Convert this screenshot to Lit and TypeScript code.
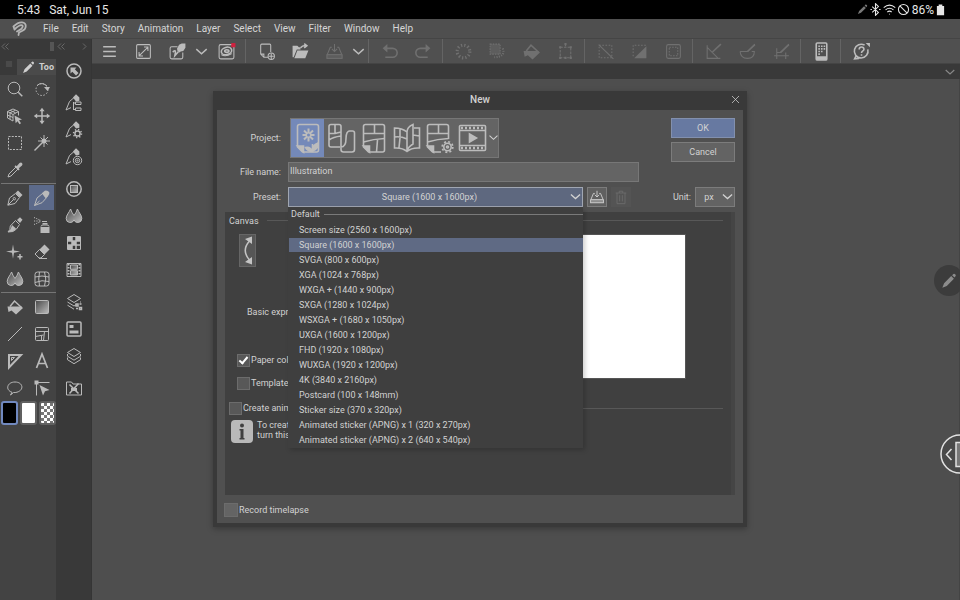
import { LitElement, html, svg, css, nothing, type SVGTemplateResult } from "lit";
import { customElement, property, state } from "lit/decorators.js";
import { classMap } from "lit/directives/class-map.js";

/* Icons are drawn on an 18 x 18 grid. Strokes and fills use currentColor. */
const pen = svg`<path d="M1.500 16.500 4 9 9.500 4.500l4 4.200L9 13.700z"/><path class="f" d="m8.800 4.300 3-2.600q3-.5 4.500 1.500.5 2-1.300 4l-2.300 2z"/><path d="m1.500 16.500 5-4.500"/>`;
const penSmall = svg`<path d="M1 16 4.500 7.500 9 3.600M1 16l5-2.400"/><path class="f" d="M8 3.400 11 .2l3.400 3.300v3.200L11 7.600z"/>`;
const blobs = svg`<path class="g" d="M5.600 2C4 6 1.200 8 1.200 11.600a4 4 0 0 0 7.800 1.200 4 4 0 0 0 7.800-1.200C16.800 8 14 6 12.400 2 11.500 5 10.300 6.500 9 8.500 7.700 6.500 6.500 5 5.600 2z"/>`;

const icons: Record<string, SVGTemplateResult> = {
  menu: svg`<path class="b" d="M3 4.500h12M3 9h12M3 13.500h12"/>`,
  expand: svg`<rect x="2.500" y="2.500" width="13" height="13" rx="1"/><path d="M5 13 13 5M9.500 4.800H13.200V8.500M4.800 9.500v3.700H8.500"/>`,
  pinPen: svg`<path d="M9 4.500H3.500Q2 4.500 2 6v8.500Q2 16 3.500 16h9q1.500 0 1.500-1.500V10"/><path class="b" d="M4.500 9.500q3-2.500 2.500.5t-.5 3 3.500-4"/><path class="f" d="M8.500 6.500 10.500 2.500 13 1.500h3.500v4l-2 3-2.500.5-1 1-2-1.500z"/>`,
  chevron: svg`<path class="b" d="m3.500 6.500 5.500 5 5.500-5"/>`,
  spiral: svg`<rect x="2" y="2.500" width="14" height="13.500" rx="1.500"/><ellipse class="b" cx="9" cy="8.500" rx="5" ry="3.500" transform="rotate(-15 9 8.500)"/><ellipse class="b" cx="9.300" cy="8.600" rx="2" ry="1.200"/><path d="M4 12q4 2.500 10-1"/><path class="red" d="M13.500 1h4v4h-4z"/>`,
  newPage: svg`<path d="M10.500 14.500H6.500L3.500 11.500V3q0-1 1-1H12q1 0 1 1v6.500M3.500 11.500h3v3"/><circle cx="13.500" cy="13.500" r="3"/><path d="M13.500 11v5M11 13.500h5"/>`,
  folder: svg`<path class="f" d="M1.500 3.500h4.500L7.500 5H9v2H5.500L2.500 14.500h-1z"/><path class="f" d="M6 8h10.500l-3 7.500H3.200z"/><path class="b" d="M9 5.500q2-2.500 5-2.200M12.500 1.500l2.500 2-2.500 2"/>`,
  save: svg`<path d="M6.500 5H5L2.300 11.500M11.500 5H13l2.700 6.500M9 2v7M6.500 6.500 9 9l2.500-2.500"/><rect x="1.800" y="12" width="14.400" height="3.500" fill="currentColor" fill-opacity=".4"/>`,
  undo: svg`<path class="b" d="M6 6h6a4.200 4.200 0 0 1 0 8.500H5"/><path class="f" d="M7 2v8L2.500 6z"/>`,
  redo: svg`<path class="b" d="M12 6H6a4.200 4.200 0 0 0 0 8.500h7"/><path class="f" d="M11 2v8l4.500-4z"/>`,
  burst: svg`<circle cx="9" cy="9" r="6" stroke-width="3" stroke-dasharray="1.200 1.940"/>`,
  shadowSel: svg`<rect x="2" y="2" width="9.500" height="9.500" fill="currentColor" fill-opacity=".4" stroke-dasharray="1.500 1"/><path stroke-width="2" stroke-dasharray="1 1.300" d="M14 6q3 8-8 8.500"/>`,
  bucket: svg`<path class="f" d="M1.500 8.500h14L17 10l-7 6.500-4.500-4-3 1.500z"/><path class="b" d="M4 8.500 8.500 3l7 6.500"/>`,
  transform: svg`<path d="M4 5h10v10H4zM9 1.500V5" stroke-dasharray="2.500 1"/><path class="f" d="M3 4h2v2H3zM13 4h2v2h-2zM3 14h2v2H3zM13 14h2v2h-2zM8 1h2v2H8zM8 14h2v2H8z"/>`,
  deselect: svg`<path d="M3 3h12v12H3z" stroke-dasharray="1.500 1.500"/><path d="m2.500 2.500 14 13.500"/>`,
  invert: svg`<path d="M15 3H3v12" stroke-dasharray="1.500 1.500"/><path class="f" d="M15.500 4v11.500H4z"/>`,
  border: svg`<rect x="2.500" y="2.500" width="13" height="13" rx="1.500"/><path d="M5 5h8v8H5z" stroke-dasharray="1.500 1.200"/>`,
  snapRuler: svg`<path d="M3 3v12.500h12.500M3 5l10 10"/><path class="b" d="m8 9.500 8-7.500"/>`,
  snapSpecial: svg`<path d="M2 9h7l7-7M2 9q.5 6.500 7 6.500T15.500 9H13"/><path class="b" d="m9 9 7-6.500"/>`,
  snapGrid: svg`<path d="M2 13h14M4.500 6v10M13 10v6M4.500 10H8l8-8"/><path class="b" d="m8 10 8-7.500"/>`,
  device: svg`<rect x="4" y="1" width="10" height="16" rx="1" class="b"/><path d="M6 4h1.500M8.500 4H10M11 4h1.500M6 6.500h1.500M8.500 6.500H10M11 6.500h1.500M6 9h1.500M8.500 9H10M6 11.500h1.500" class="b"/><path class="f" d="M4 13.500h10V17H4z"/>`,
  help: svg`<path class="b" d="M12 3a6.500 6.500 0 1 0 3 4M4 13l-1.500 3 4-.5M6.800 7c0-3 4.500-3 4.500 0 0 1.500-2.300 1.500-2.300 3.500M9 11.700v1.300"/><path class="f" d="M13 1h4v4z"/>`,

  quick: svg`<circle class="b" cx="9" cy="9" r="7"/><path class="f" d="M5.500 5.500h6L9.800 7.300l3.700 3.700-2.500 2.500-3.700-3.700-1.800 1.700z"/>`,
  penTree: svg`${penSmall}<path d="M8.500 8v8M8.500 9h2M8.500 15.500h2M10.500 8h5.500v2.500h-5.500zM10.500 14h5.500v2.500h-5.500z"/>`,
  penGear: svg`${penSmall}<circle cx="12.500" cy="12.500" r="2.600" class="b"/><circle cx="12.500" cy="12.500" r="4" stroke-dasharray="1.300 1.840" stroke-width="1.500"/>`,
  penTarget: svg`${penSmall}<circle cx="12.500" cy="12.500" r="4.200"/><circle cx="12.500" cy="12.500" r="2.200"/><circle cx="12.500" cy="12.500" r=".6"/>`,
  wheel: svg`<circle cx="9" cy="9" r="7.200" class="b"/><rect class="g" x="5.500" y="5.500" width="7" height="7"/>`,
  blobs,
  palette: svg`<path d="M2.500 2.500h13v13h-13z"/><path class="f" d="M3 3h4v4H3zM11 3h4v4h-4zM7 7h4v4H7zM3 11h4v4H3z"/><path class="b" d="M7 2.500v13M11 2.500v13M2.500 7h13M2.500 11h13"/>`,
  film: svg`<path d="M2 2.500h14v13H2z"/><path class="g" d="M5.500 4h7v4.300h-7zM5.500 9.700h7v4.300h-7z"/><path stroke-width="2" stroke-dasharray="1.500 1.500" d="M3.500 3v12M14.500 3v12"/>`,
  layersGear: svg`<path d="m2.500 5.500 6.500-4 6.500 4-6.500 4zM2.500 9 9 13l2-1.200M2.500 12.200 9 16.200M15.500 8.500v1"/><path class="b" d="M11 11h2v2h-2zM14.500 14.500h2v2h-2zM14.500 11h2M11 15.500h2"/>`,
  navigator: svg`<rect class="b" x="2" y="2" width="14" height="14" rx="1"/><path class="f" d="M4.500 5h4v3h-4zM4.500 10.500h9v3h-9z"/>`,
  layers: svg`<path d="m2.500 5.500 6.500-4 6.500 4-6.500 4zM2.500 7v2.200l6.500 4 6.500-4V7M2.500 10.500v2.200l6.500 4 6.500-4v-2.200"/>`,
  folderX: svg`<path d="M1.500 3h5l1.500 2h8.500v11h-15z"/><path class="b" d="m4.500 5.500 9 9M13.500 4.500l-9 10"/><path class="f" d="M6 9h6v3H6z"/>`,

  zoom: svg`<circle cx="8" cy="8" r="5.800"/><path class="b" d="m12.300 12.300 4 4"/>`,
  rotate: svg`<circle cx="9" cy="9.500" r="6" stroke-dasharray="1.500 1.640"/><path d="M4 5.500a6.500 6.500 0 0 1 10 1"/><path class="f" d="M11 7h6l-2.500 4z"/>`,
  cube: svg`<path d="M1.500 4.500 7 2l5.500 2.500v4M1.500 4.500V11L7 14V7.500M1.500 4.500 7 7.500l5.500-3M4 3.300l5.500 2.500M9.500 3.300 4 5.800V12M1.500 8 7 10.500"/><path class="f" d="m8.500 8.500 7.500 4-3 .8 2 3-1.500 1-2-3-1.800 2z"/>`,
  move: svg`<path class="b" d="M9 3v12M3 9h12"/><path class="f" d="M9 .8l2.600 3.400H6.400zM9 17.200l2.600-3.400H6.400zM.8 9l3.400-2.600v5.200zM17.200 9l-3.400-2.600v5.200z"/>`,
  marquee: svg`<path d="M2.500 2.500h13v13h-13z" stroke-dasharray="2 1.250"/>`,
  wand: svg`<path class="b" d="m1.500 16.500 8-8"/><path d="M11 1v12M5 7h12M7.500 3.500l7 7M15 3l-5 5"/><circle class="f" cx="11" cy="7" r="2.500"/>`,
  dropper: svg`<path d="m2 16 1-3 7-7 2 2-7 7z"/><path class="f" d="m8.500 5.500 1.200-1.200 1 .9L13.500 2q1.500-1 2.500 0t0 2.500l-3.200 2.800.9 1-1.200 1.200z"/>`,
  nib: svg`<path d="M1.800 16.200 3.500 9 9.500 4.500l4 4L9 14.500z"/><path class="f" d="m9.500 4 2.500-2.500 4.500 4.500L14 8.500z"/><path d="m2 16 5.500-5.500"/><circle cx="8.300" cy="9.700" r="1.200"/>`,
  pen,
  brush: svg`<path class="f" d="m11 4 3-2.800 2.500 2.500L14 7z"/><path d="m9.500 4.500 4 4-3 4.500q-3 3.500-8.500 3 2.500-2 2.300-6z"/><path class="f" d="M2 16q6 0 8-3.500L6 9q-.5 4-4 7z"/>`,
  airbrush: svg`<path class="f" d="M7.500 11h9v6h-9zM9.500 7h5v1.500h-5z"/><path d="M8 10.500q0-1.500 2-1.500h4q2 0 2 1.500M9 5.500h5"/><path stroke-dasharray="1.200 1.200" d="M1 1.500l7 3M1 5h7M1 8.500l7-3"/>`,
  sparkle: svg`<path class="f" d="M7 1.500 8 7.500l6 1L8 9.700l-1 6-1-6-6-1.200 6-1z"/><path class="b" d="M14 11v5.500M11.500 13.700h5"/>`,
  eraser: svg`<path class="f" d="m6.500 6.500 5-5 5 5-5 5z"/><path d="m6.500 6.500-4.500 4.500 4 4H8l3.500-3.500zM6 15.500h8"/>`,
  liquify: svg`<rect x="2" y="2" width="14" height="14" rx="2.500"/><path d="M6.500 2q-1.500 7 0 14M11.500 2q2.500 7 0 14M2 7q7-2 14 0M2 12.500q7-3 14-1"/>`,
  gradient: svg`<rect class="g" x="2.500" y="2.500" width="13" height="13" rx="1"/>`,
  line: svg`<path d="M2 16 16 2"/>`,
  panels: svg`<rect x="2.500" y="2.500" width="13" height="13" rx="1"/><path d="M2.500 6.500h13M8.500 15.500V10.500M2.500 11.500 10.500 10M10.500 15.500l1-9"/>`,
  rulerTool: svg`<path stroke-width="2" d="M3 3h12L3 15.500z"/><path d="M5.500 5.500h3l-3 3z"/>`,
  text: svg`<path stroke-width="1.700" d="M3.500 16 9 2l5.500 14M5.500 11.500h7"/>`,
  balloon: svg`<path d="M6 13.300C-1 11 1 3 9 3s9.500 8 2 10.200q-2 .6-3.500.3L4.500 16z"/>`,
  node: svg`<path class="f" d="M1.500 1.500h4v4h-4zM6.500 6l10 5-4.500 1.300-2 4.200z"/><path d="M3.500 3.500h13M3.500 3.500v13"/>`,
  hamburgerSmall: svg`<path d="M2 4.500h14M2 9h14M2 13.500h14"/>`,
  doubleLeft: svg`<path class="b" d="M8 3 2 9l6 6M15 3 9 9l6 6"/>`,
  right: svg`<path class="b" d="m6 3 6 6-6 6"/>`,
  pencil: svg`<path class="f" d="m1.500 16.500 2-5 8-8 3 3-8 8zM12.500 2.500 14 1q1-.5 2 .5t.5 2L15.200 5.200z"/>`,

  bluetooth: svg`<path class="b" d="m4.500 5 8.500 8-4 4V1l4 4-8.500 8M2 9h2M14 9h2"/>`,
  wifi: svg`<path class="b" d="M1 6.500q8-7 16 0M3.500 9.500q5.500-4.500 11 0M6 12.500q3-2.500 6 0M9 15v1"/>`,
  blocked: svg`<circle class="b" cx="9" cy="9" r="7"/><path class="b" d="m4 4 10 10"/>`,
  battery: svg`<path class="f" d="M6.500 2h5v2H14v13H4V4h2.500z"/>`,
  close: svg`<path class="b" d="m2 2 14 14M16 2 2 16"/>`,
  trash: svg`<path d="M3 4.500h12M4.500 4.500v12h9v-12M7 4.500v-2h4v2M7.500 7v7M10.500 7v7"/>`,
};

@customElement("ui-icon")
export class UiIcon extends LitElement {
  @property() name = "";
  static styles = css`
    :host { display: inline-flex; width: 18px; height: 18px; flex: none; }
    svg { width: 100%; height: 100%; display: block; fill: none; stroke: currentColor; }
    .f { fill: currentColor; stroke: none; }
    .b { stroke-width: 1.5; }
    .g { fill: url(#shade); }
    .red { fill: #d0213f; stroke: none; }
  `;
  render() {
    return html`<svg viewBox="0 0 18 18" aria-hidden="true">
      <defs><linearGradient id="shade" x1="0" y1="0" x2="1" y2="1">
        <stop offset="0" stop-color="#484848" /><stop offset="1" stop-color="#bdbdbd" />
      </linearGradient></defs>
      ${icons[this.name] ?? nothing}</svg>`;
  }
}

/* Page type pictures of the project bar, drawn on a 30 x 32 grid. */
const pageFold = svg`<path d="M9.500 30 4.500 25V4.500q0-2 2-2h17q2 0 2 2V28q0 2-2 2z"/><path class="f" d="M4.500 24h6v6z"/>`;
const projects: { label: string; art: SVGTemplateResult }[] = [
  {
    label: "Illustration",
    art: svg`${pageFold}<path stroke-width="2" d="M15.500 6.500v13M9.500 13h12M11 8.500l9 9M20 8.500l-9 9"/><circle cx="15.500" cy="13" r="1.500" fill="#7489b9" stroke="none"/><path d="M19.500 29V22"/><path class="f" d="M19.500 29.500q-5 0-7-4 5-1 7 4zM19.500 29q-.5-6 5.500-8 1 6-5.500 8z"/>`,
  },
  {
    label: "Webtoon",
    art: svg`<path d="M15 9V4.500q0-2-2-2H5q-2 0-2 2V23q0 2 2 2h9M9 2.500V11M3 11.500h6l6-1.500M3 18q4-3 12-4M15 9v18.500q0 2.500 2.500 2.500H26q2.500 0 2.500-2.500V11q0-2-2-2h-4M15 25q5 0 5-8.500Q20 9 24 9"/>`,
  },
  {
    label: "Comic",
    art: svg`${pageFold}<path d="M4.500 11.500h21M15.500 3v8.500M4.500 20q10-3 21-3.500M18.500 18l-1 12"/>`,
  },
  {
    label: "Print of fanzine",
    art: svg`<path d="M15 10v19.500M15 10Q10 6 2.500 6v20q8-.5 12.500 3.500Q19.500 25.500 27.500 26V6H22M15 10q0-5 6-7.500V22q-5 3-6 7M2.500 15q6-1 12.500 2M8 6.500V15M8 16l-1 9.500M21 13l6.500 1"/>`,
  },
  {
    label: "Show all comic settings",
    art: svg`<path d="M16 30H7.500L2.500 25V4.500q0-2 2-2h17q2 0 2 2V17M2.500 11.500h21M13.500 3v8.500M2.500 20q10-3 21-3.500"/><path class="f" d="M2.500 24h6v6z"/><circle cx="22.500" cy="25" r="3.700"/><circle cx="22.500" cy="25" r="1"/><circle cx="22.500" cy="25" r="5.300" stroke-width="1.700" stroke-dasharray="2 2.160"/>`,
  },
  {
    label: "Animation",
    art: svg`<rect x="1.500" y="3.500" width="26" height="25" rx="1"/><path d="M1.500 8.500h26M1.500 23.500h26"/><path stroke-width="2.500" stroke-dasharray="2 2" d="M3 6h24M3 26h24"/><path class="f" d="m11.500 12 7 4-7 4z"/>`,
  },
];

const presets = [
  "Screen size (2560 x 1600px)", "Square (1600 x 1600px)", "SVGA (800 x 600px)", "XGA (1024 x 768px)",
  "WXGA + (1440 x 900px)", "SXGA (1280 x 1024px)", "WSXGA + (1680 x 1050px)", "UXGA (1600 x 1200px)",
  "FHD (1920 x 1080px)", "WUXGA (1920 x 1200px)", "4K (3840 x 2160px)", "Postcard (100 x 148mm)",
  "Sticker size (370 x 320px)", "Animated sticker (APNG) x 1 (320 x 270px)",
  "Animated sticker (APNG) x 2 (640 x 540px)",
];

@customElement("new-dialog")
export class NewDialog extends LitElement {
  @state() private preset = "Square (1600 x 1600px)";
  @state() private project = 0;

  static styles = css`
    :host { display: block; width: 534px; max-width: 100%; }
    * { box-sizing: border-box; }
    button, input, select { font: inherit; color: inherit; margin: 0; padding: 0; border-radius: 0; }
    .dialog { border: 4px solid #393939; border-top: 0; background: #505050; color: #d2d2d2;
      font: 9px/14px Roboto, sans-serif; box-shadow: 0 2px 6px #0004; }
    .title { display: grid; grid-template-columns: 24px 1fr 24px; align-items: center; justify-items: center;
      height: 19px; background: #393939; }
    .title h1 { grid-column: 2; margin: 0; font-size: 10px; font-weight: 500; }
    .close { background: none; border: 0; display: flex; padding: 0 0 2px 8px; }
    .close ui-icon { width: 9px; height: 9px; }
    .body { padding: 8px 8px 6px; }
    .top { display: flex; gap: 32px; }
    .fields { flex: 1; display: grid; grid-template-columns: 56px 1fr; gap: 4px 7px; align-items: center; }
    .label { text-align: right; }
    .projects { display: flex; width: 209px; height: 40px; margin-left: 2px; background: #646464; border: 1px solid #767676; }
    .project { flex: none; width: 33px; display: grid; place-items: center; background: none; border: 0; color: #bcbcbc; }
    .project.on { background: #7489b9; }
    .project svg { width: 30px; height: 32px; fill: none; stroke: currentColor; stroke-width: 1.600; }
    .project .f { fill: currentColor; }
    .more { flex: 1; min-width: 0; display: flex; align-items: center; justify-content: center; background: none; border: 0; }
    .more ui-icon { width: 13px; height: 13px; }
    .name { width: 100%; height: 20px; padding: 0 0 2px 1px; background: #646464; border: 1px solid #777; }
    .actions { width: 64px; display: flex; flex-direction: column; gap: 4px; }
    .btn { height: 20px; background: #636363; border: 1px solid #7c7c7c; }
    .btn.primary { background: #6779a1; border-color: #8290ae; }
    .preset-row { display: grid; grid-template-columns: 59px 295px 20px 20px 1fr 40px; column-gap: 4px; align-items: center; margin-top: 5px; }
    .preset-row > .label:first-child { padding-right: 3px; }
    .combo { position: relative; display: grid; align-items: center; }
    .combo.preset { z-index: 2; }
    .combo select { grid-area: 1 / 1; appearance: none; width: 100%; height: 20px; text-align: center;
      background: #636363; border: 1px solid #7c7c7c; padding-right: 12px; }
    .combo.preset select { background: #5e687f; border-color: #a0a6b2; }
    .combo > ui-icon { grid-area: 1 / 1; justify-self: end; width: 15px; height: 15px; pointer-events: none; }
    .tool { width: 20px; height: 20px; display: grid; place-items: center; background: #606060; border: 1px solid #7c7c7c; }
    .tool ui-icon { width: 16px; height: 16px; }
    .tool.off { background: #545454; border-color: #545454; color: #6c6c6c; }
    .menu { position: absolute; top: 100%; left: 0; right: 0; background: #3f3f3f; padding-bottom: 1px; box-shadow: 2px 2px 5px #0003; }
    .menu-head { display: flex; align-items: center; gap: 4px; height: 15px; padding-left: 3px; }
    .menu-head::after, .section-head::after { content: ""; flex: 1; height: 1px; background: #7a7a7a; }
    .menu ul { list-style: none; margin: 0; padding: 0 0 0 1px; }
    .menu li { height: 15px; padding-left: 10px; border-top: 1px solid #3f3f3f; line-height: 14px; cursor: default; }
    .menu li.on { background: #5f6a84; }
    .panel { margin-top: 5px; min-height: 283px; background: #404040; border-right: 4px solid #454545; padding: 2px 8px 0 4px; }
    .section-head { display: flex; align-items: center; gap: 8px; height: 14px; }
    .section-head::after { background: #585858; }
    .canvas { display: flex; justify-content: space-between; padding: 6px 38px 0 8px; }
    .turn { width: 17px; height: 33px; margin-left: 2px; display: grid; place-items: center; background: #565656; border: 1px solid #666; color: #c4c4c4; }
    .turn svg { width: 11px; height: 29px; fill: none; stroke: currentColor; }
    .turn .f { fill: currentColor; stroke: none; }
    .expression { margin: 38px 0 35px 10px; }
    .preview { width: 143px; height: 143px; margin-top: 1px; background: #fff; outline: 1px solid #555; }
    .check { display: flex; align-items: center; gap: 1px; height: 13px; }
    .check + .check { margin-top: 10px; }
    .check input { appearance: none; width: 13px; height: 13px; background: #585858; border: 1px solid #6c6c6c;
      display: flex; align-items: flex-start; justify-content: center; }
    .check input:checked::after { content: ""; box-sizing: border-box; width: 5px; height: 9px;
      border: solid #fff; border-width: 0 2px 2px 0; transform: rotate(40deg); }
    .section-head.anim { margin-top: 11px; height: 15px; }
    .note { display: flex; gap: 4px; margin: 4px 0 0 2px; line-height: 10px; }
    .note svg { width: 22px; height: 23px; }
    .note p { margin: 0; }
    .timelapse { margin-top: 8px; height: 14px; margin-left: -1px; }
    .timelapse input { width: 14px; height: 14px; background: #646464; }
  `;

  render() {
    return html`<section class="dialog" role="dialog" aria-labelledby="t">
      <header class="title"><h1 id="t">New</h1>
        <button class="close" aria-label="Close"><ui-icon name="close"></ui-icon></button></header>
      <div class="body">
        <div class="top">
          <div class="fields">
            <span class="label">Project:</span>
            <div class="projects">
              ${projects.map((p, i) => html`<button
                class=${classMap({ project: true, on: i === this.project })}
                aria-label=${p.label} @click=${() => (this.project = i)}>
                <svg viewBox="0 0 30 32">${p.art}</svg></button>`)}
              <button class="more" aria-label="More"><ui-icon name="chevron"></ui-icon></button>
            </div>
            <label class="label" for="name">File name:</label>
            <input class="name" id="name" type="text" value="Illustration" />
          </div>
          <div class="actions">
            <button class="btn primary">OK</button>
            <button class="btn">Cancel</button>
          </div>
        </div>
        <div class="preset-row">
          <label class="label" for="preset">Preset:</label>
          <div class="combo preset">
            <select id="preset"><option>${this.preset}</option></select>
            <ui-icon name="chevron"></ui-icon>
            <div class="menu">
              <div class="menu-head">Default</div>
              <ul role="listbox" aria-label="Preset">
                ${presets.map((p) => html`<li role="option" class=${classMap({ on: p === this.preset })}
                  aria-selected=${p === this.preset} @click=${() => (this.preset = p)}>${p}</li>`)}
              </ul>
            </div>
          </div>
          <button class="tool" aria-label="Save preset"><ui-icon name="save"></ui-icon></button>
          <button class="tool off" disabled aria-label="Delete preset"><ui-icon name="trash"></ui-icon></button>
          <label class="label" for="unit">Unit:</label>
          <div class="combo">
            <select id="unit"><option>px</option></select>
            <ui-icon name="chevron"></ui-icon>
          </div>
        </div>
        <div class="panel">
          <div class="section-head">Canvas</div>
          <div class="canvas">
            <div>
              <button class="turn" aria-label="Swap width and height">
                <svg viewBox="0 0 11 29"><path stroke-width="1.500" d="M7.500 5Q-1 14.500 7.500 24" />
                  <path class="f" d="M3 3 10 .5V8zM3 26l7 2.500V21z" /></svg>
              </button>
              <div class="expression">Basic expr</div>
              <label class="check"><input type="checkbox" checked />Paper col</label>
              <label class="check"><input type="checkbox" />Template</label>
            </div>
            <div class="preview"></div>
          </div>
          <div class="section-head anim">
            <label class="check"><input type="checkbox" />Create anim</label>
          </div>
          <div class="note">
            <svg viewBox="0 0 22 23"><rect width="22" height="23" rx="4" fill="#b9b9b9" />
              <circle cx="11" cy="5.500" r="2" fill="#404040" />
              <path fill="#404040" d="M8.500 9h4v9h1v1.500h-5V18h1v-7.500h-1z" /></svg>
            <p>To creat<br />turn this</p>
          </div>
        </div>
        <label class="check timelapse"><input type="checkbox" />Record timelapse</label>
      </div>
    </section>`;
  }
}

const menus = ["File", "Edit", "Story", "Animation", "Layer", "Select", "View", "Filter", "Window", "Help"];
const toolbar: { off?: boolean; items: string[] }[] = [
  { items: ["menu", "expand", "pinPen", "chevron", "spiral"] },
  { items: ["newPage", "folder", "save:off", "chevron"] },
  { off: true, items: ["undo", "redo"] },
  { off: true, items: ["burst", "shadowSel", "bucket", "transform"] },
  { off: true, items: ["deselect", "invert", "border"] },
  { off: true, items: ["snapRuler", "snapSpecial", "snapGrid"] },
  { items: ["device"] },
  { items: ["help"] },
];
const toolGroups = [
  ["zoom", "rotate", "cube", "move", "marquee", "wand", "dropper"],
  ["nib", "pen", "brush", "airbrush", "sparkle", "eraser", "blobs", "liquify"],
  ["bucket", "gradient", "line", "panels", "rulerTool", "text", "balloon", "node"],
];
const dockGroups = [
  ["quick"],
  ["penTree", "penGear", "penTarget"],
  ["wheel", "blobs", "palette", "film"],
  ["layersGear", "navigator", "layers"],
  ["folderX"],
];

@customElement("app-root")
export class AppRoot extends LitElement {
  @state() private tool = "pen";

  static styles = css`
    :host { display: flex; flex-direction: column; position: relative; min-height: 100vh; overflow: hidden;
      background: #4e4e4e; color: #d6d6d6; font: 10px/14px Roboto, sans-serif; }
    * { box-sizing: border-box; }
    button { font: inherit; color: inherit; margin: 0; padding: 0; border: 0; background: none; }
    .status { display: flex; align-items: center; gap: 9px; height: 19px; padding: 0 13px 0 17px; background: #000; color: #e6e6e6; font-size: 12px; }
    .status .right { display: flex; align-items: center; gap: 1px; margin-left: auto; }
    .status ui-icon { width: 13px; height: 13px; }
    .status .pct { display: flex; align-items: center; padding-left: 1px; }
    .status .dim { color: #777; width: 11px; height: 11px; }
    .menubar { display: flex; align-items: center; gap: 13px; height: 20px; padding-left: 12px; border-bottom: 1px solid #454545; background: #4f4f4f; font-size: 10px; }
    .logo { width: 15px; height: 15px; margin-right: 3px; }
    .main { flex: 1; display: flex; background: #393939; }
    .tools { width: 56px; background: #393939; display: flex; flex-direction: column; }
    .panel-head { display: flex; align-items: center; justify-content: space-between; height: 15px; color: #777; padding: 0 2px 0 1px; }
    .panel-head ui-icon { width: 9px; height: 9px; }
    .grip { width: 4px; height: 9px; background: #555; }
    .tab-row { display: flex; height: 21px; padding-top: 5px; color: #888; }
    .tab-row > ui-icon { width: 8px; height: 8px; margin: 1px 4px 0 5px; }
    .tab { flex: 1; display: flex; align-items: center; gap: 4px; padding-left: 5px; background: #4a4a4a; color: #cfcfcf;
      font-size: 9px; font-weight: 700; overflow: hidden; }
    .tab ui-icon { width: 13px; height: 13px; }
    .tool-body { flex: 1; background: #434343; padding-left: 1px; }
    .grid { display: grid; grid-template-columns: 27px 27px; grid-auto-rows: 27px; justify-items: center; align-items: center; }
    .grid + .grid { border-top: 1px solid #757575; }
    .tool { width: 25px; height: 25px; display: grid; place-items: center; color: #bababa; }
    .tool ui-icon { width: 18px; height: 18px; }
    .tool.on { background: #5c6a8a; }
    .swatches { display: flex; gap: 2px; }
    .swatch { flex: none; width: 17px; height: 24px; border: 2px solid #606060; border-radius: 3px; background: #fff; }
    .swatch.black { background: #000; border-color: #7189bf; }
    .swatch.clear { background: repeating-conic-gradient(#777 0 25%, #fff 0 50%) 0 0 / 6px 6px; }
    .dock { width: 36px; display: flex; flex-direction: column; align-items: center; color: #bababa; border-right: 1px solid #353535; }
    .dock .panel-head { width: 100%; }
    .dock-group { display: flex; flex-direction: column; margin-top: 5px; }
    .dock-group:nth-child(2) { margin-top: 3px; }
    .dock-btn { width: 27px; height: 27px; display: grid; place-items: center; }
    .dock-btn ui-icon { width: 18px; height: 18px; }
    .work { flex: 1; min-width: 0; display: flex; flex-direction: column; }
    .toolbar { display: flex; height: 25px; background: #505050; border-bottom: 1px solid #444; color: #bcbcbc; }
    .group { display: flex; padding-right: 2px; }
    .group + .group { border-left: 1px solid #646464; padding-left: 3px; }
    .bar-btn { width: 34px; display: flex; align-items: center; justify-content: center; }
    .bar-btn.narrow { width: 15px; }
    .bar-btn ui-icon { width: 19px; height: 19px; }
    .bar-btn.narrow ui-icon { width: 17px; height: 17px; }
    .bar-btn.off { color: #707070; }
    .strip { height: 15px; display: flex; align-items: center; justify-content: flex-end; padding-right: 3px; color: #888; }
    .strip ui-icon { width: 14px; height: 14px; }
    .desk { flex: 1; background: #4e4e4e; border-right: 1px solid #444; }
    .overlay { position: absolute; inset: 19px 0 0; display: grid; place-items: center; padding-bottom: 2px; }
    .float-pen { position: absolute; right: -4px; top: 265px; width: 30px; height: 31px; border-radius: 50%; background: #3c3c3c;
      color: #8c8c8c; display: grid; place-items: center; }
    .float-pen ui-icon { width: 16px; height: 16px; }
    .side { position: absolute; right: -20px; top: 434px; width: 40px; height: 40px; color: #e2e2e2; }
    .side svg { width: 40px; height: 40px; display: block; fill: none; stroke: currentColor; }
  `;

  private barButton(entry: string, groupOff?: boolean) {
    const [name, flag] = entry.split(":");
    const off = !!groupOff || flag === "off";
    return html`<button class=${classMap({ "bar-btn": true, narrow: name === "chevron", off })}
      ?disabled=${off} aria-label=${name}><ui-icon name=${name}></ui-icon></button>`;
  }

  render() {
    return html`
      <div class="status">
        <span>5:43</span><span>Sat, Jun 15</span>
        <span class="right">
          <ui-icon class="dim" name="pencil"></ui-icon><ui-icon name="bluetooth"></ui-icon>
          <ui-icon name="wifi"></ui-icon><ui-icon name="blocked"></ui-icon>
          <span class="pct">86%<ui-icon name="battery"></ui-icon></span>
        </span>
      </div>
      <nav class="menubar">
        <svg class="logo" viewBox="0 0 15 15" fill="none" stroke="#b4b4b4" stroke-width="1.800" stroke-linecap="round">
          <path d="M1.500 5.500Q6 1 10 1.300c5 .5 5 6.500 0 8.700L7 11.500l-.5 2.500M2.500 8.500Q7 4 9.500 4.200t0 3.500L5 10.500M1.500 5.500l1 3" />
        </svg>
        ${menus.map((m) => html`<button>${m}</button>`)}
      </nav>
      <div class="main">
        <aside class="tools">
          <div class="panel-head"><ui-icon name="doubleLeft"></ui-icon><span class="grip"></span></div>
          <div class="tab-row"><ui-icon name="hamburgerSmall"></ui-icon>
            <div class="tab"><ui-icon name="pencil"></ui-icon>Too</div></div>
          <div class="tool-body">
            ${toolGroups.map((g) => html`<div class="grid">${g.map((t) => html`<button
              class=${classMap({ tool: true, on: t === this.tool })} aria-label=${t}
              @click=${() => (this.tool = t)}><ui-icon name=${t}></ui-icon></button>`)}</div>`)}
            <div class="swatches">
              <button class="swatch black" aria-label="Main color"></button>
              <button class="swatch" aria-label="Sub color"></button>
              <button class="swatch clear" aria-label="Transparent"></button>
            </div>
          </div>
        </aside>
        <aside class="dock">
          <div class="panel-head"><ui-icon name="doubleLeft"></ui-icon><ui-icon name="right"></ui-icon></div>
          ${dockGroups.map((g) => html`<div class="dock-group">${g.map((d) => html`<button class="dock-btn"
            aria-label=${d}><ui-icon name=${d}></ui-icon></button>`)}</div>`)}
        </aside>
        <div class="work">
          <div class="toolbar">${toolbar.map((g) => html`<div class="group">${g.items.map((i) => this.barButton(i, g.off))}</div>`)}</div>
          <div class="strip"><ui-icon name="chevron"></ui-icon></div>
          <div class="desk"></div>
        </div>
      </div>
      <div class="overlay"><new-dialog></new-dialog></div>
      <button class="float-pen" aria-label="Pen menu"><ui-icon name="pencil"></ui-icon></button>
      <button class="side" aria-label="Open side panel">
        <svg viewBox="0 0 40 40"><circle cx="20" cy="20" r="19" fill="#4a4a4a" stroke-width="1.500" />
          <path stroke-width="1.500" d="m11.500 15-5 5.500 5 5.500" /><path fill="#777" stroke-width="1.500" d="M16 8.500h14v24H16z" /></svg>
      </button>
    `;
  }
}
